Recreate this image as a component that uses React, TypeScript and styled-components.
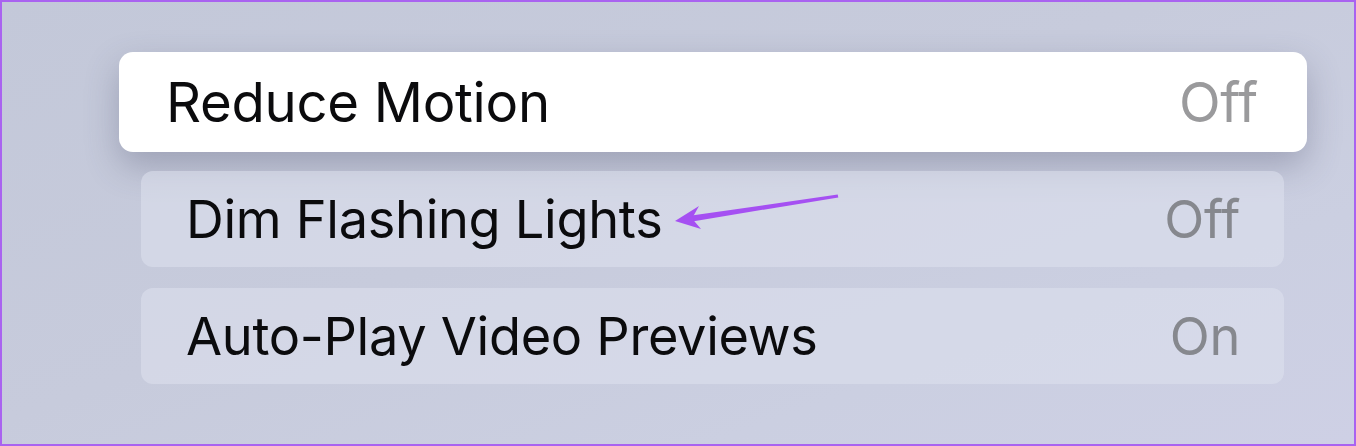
import React from "react";
import styled, { createGlobalStyle } from "styled-components";

const GlobalStyle = createGlobalStyle`
  html, body {
    margin: 0;
    padding: 0;
  }
  body {
    font-family: Inter, "Noto Sans", Arial, sans-serif;
    -webkit-font-smoothing: antialiased;
  }
`;

const Screen = styled.div`
  position: relative;
  box-sizing: border-box;
  width: 1356px;
  height: 446px;
  border: 2px solid #a963f0;
  padding: 50px 0 0 139px;
  overflow: hidden;
  background: linear-gradient(
    160deg,
    #c3c8d9 0%,
    #c7cbdc 45%,
    #cbcfe1 75%,
    #ced0e5 100%
  );
`;

const List = styled.div`
  width: 1143px;
  display: flex;
  flex-direction: column;
  gap: 21px;
`;

const Row = styled.div<{ $focused?: boolean }>`
  box-sizing: border-box;
  display: flex;
  align-items: center;
  justify-content: space-between;
  height: ${(p) => (p.$focused ? "100px" : "96px")};
  margin: ${(p) => (p.$focused ? "0 -23px -2px -22px" : "0")};
  padding: ${(p) => (p.$focused ? "0 49px 0 47px" : "0 44px 0 45px")};
  border-radius: ${(p) => (p.$focused ? "14px" : "12px")};
  background: ${(p) => (p.$focused ? "#ffffff" : "rgba(222, 225, 238, 0.55)")};
  box-shadow: ${(p) =>
    p.$focused ? "0 14px 34px rgba(70, 76, 104, 0.32)" : "none"};
`;

const Label = styled.span<{ $focused?: boolean }>`
  font-size: ${(p) => (p.$focused ? "54.5px" : "52.3px")};
  font-weight: 400;
  color: #0b0b0d;
  letter-spacing: -0.3px;
`;

const Value = styled.span<{ $focused?: boolean }>`
  font-size: ${(p) => (p.$focused ? "54.5px" : "52.3px")};
  font-weight: 400;
  color: ${(p) => (p.$focused ? "#9a9a9c" : "#86888e")};
  letter-spacing: -0.3px;
`;

const Arrow = styled.svg`
  position: absolute;
  left: 658px;
  top: 186px;
  width: 185px;
  height: 45px;
`;

const settings = [
  { label: "Reduce Motion", value: "Off", focused: true },
  { label: "Dim Flashing Lights", value: "Off" },
  { label: "Auto-Play Video Previews", value: "On" },
];

export default function App() {
  return (
    <>
      <GlobalStyle />
      <Screen>
        <List>
          {settings.map((s) => (
            <Row key={s.label} $focused={s.focused}>
              <Label $focused={s.focused}>{s.label}</Label>
              <Value $focused={s.focused}>{s.value}</Value>
            </Row>
          ))}
        </List>
        <Arrow viewBox="660 188 185 45">
          <polygon
            fill="#a550f2"
            points="837.7,194.6 838.3,197.4 692.4,221.4 691.6,215.6"
          />
          <polygon
            fill="#a550f2"
            points="675,221 699,206 692,218.5 701,229"
          />
        </Arrow>
      </Screen>
    </>
  );
}
